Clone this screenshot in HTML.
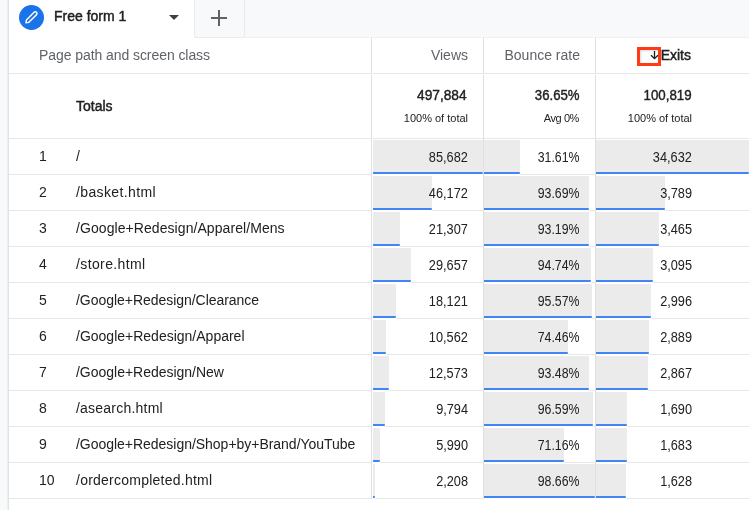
<!DOCTYPE html>
<html><head><meta charset="utf-8"><style>
*{margin:0;padding:0;box-sizing:border-box}
html,body{width:749px;height:510px;overflow:hidden;background:#fff}
body{position:relative;font-family:"Liberation Sans",sans-serif;color:#202124}
.a{position:absolute}
.t{position:absolute;white-space:nowrap;line-height:1}
.hl{position:absolute;left:9px;width:740px;height:1px;background:#e8e8e8}
.vl{position:absolute;width:1px;background:#e0e0e0}
.bar{position:absolute;background:#ebebeb}
.blu{position:absolute;left:0;right:0;bottom:0;height:2px;background:#4285f4;border-radius:0 1px 1px 0}
.wu{position:absolute;left:0;right:0;bottom:-1px;height:1px;background:#fff}
.num{position:absolute;white-space:nowrap;line-height:1;font-size:14px;text-align:right}
</style></head><body>

<div id="root" style="position:absolute;left:0;top:0;width:749px;height:510px;will-change:transform">
<div class="a" style="left:0;top:0;width:749px;height:38px;background:#f8f9fa"></div>
<div class="a" style="left:0;top:37px;width:749px;height:1px;background:#eef0f1"></div>
<div class="a" style="left:0;top:0;width:8px;height:510px;background:#f8f9fa"></div>
<div class="a" style="left:8px;top:0;width:1px;height:510px;background:#e2e3e4;box-shadow:-1px 0 1.5px #e9eaeb"></div>
<div class="a" style="left:9px;top:0;width:185px;height:38px;background:#fff"></div>
<div class="a" style="left:19px;top:5px;width:25px;height:25px;border-radius:50%;background:#1a73e8"></div>
<svg class="a" style="left:19px;top:5px" width="25" height="25" viewBox="0 0 25 25"><g transform="translate(12.3 12.5) rotate(-45)"><path d="M-7.4 0 L-5.2 -1.7 H5.6 A1.7 1.7 0 0 1 5.6 1.7 H-5.2 Z" fill="none" stroke="#fff" stroke-width="1.5" stroke-linejoin="miter"/></g></svg>
<div class="t" style="left:54px;top:9px;font-size:14px;-webkit-text-stroke:0.45px #202124;color:#202124">Free form 1</div>
<svg class="a" style="left:169px;top:15px" width="10" height="5" viewBox="0 0 10 5"><path d="M0 0 L10 0 L5 5 Z" fill="#3c4043"/></svg>
<div class="a" style="left:194px;top:-4px;width:51px;height:42px;background:#f8f9fa;border:1px solid #e9ebee;border-radius:3px"></div>
<div class="a" style="left:211px;top:17px;width:16px;height:2px;background:#5f6368"></div>
<div class="a" style="left:218px;top:10px;width:2px;height:16px;background:#5f6368"></div>
<div class="t" style="left:39px;top:48px;font-size:14px;letter-spacing:-0.07px;color:#5f6368">Page path and screen class</div>
<div class="num" style="right:281px;top:48px;color:#5f6368">Views</div>
<div class="num" style="right:169px;top:48px;color:#5f6368">Bounce rate</div>
<div class="num" style="right:58px;top:48px;-webkit-text-stroke:0.45px #202124;color:#202124">Exits</div>
<div class="a" style="left:637px;top:47px;width:24px;height:19px;border:3px solid #ff3a14;background:#fbfcfc;box-shadow:inset 1px 1px 2px #d3dfe2"></div>
<svg class="a" style="left:649px;top:49px" width="11" height="12" viewBox="0 0 11 12"><path d="M5.5 2 V9.5 M2 6.2 L5.5 9.7 L9 6.2" fill="none" stroke="#202124" stroke-width="1.3"/></svg>
<div class="hl" style="top:73px"></div>
<div class="hl" style="top:138px"></div>
<div class="hl" style="top:174px"></div>
<div class="hl" style="top:210px"></div>
<div class="hl" style="top:246px"></div>
<div class="hl" style="top:282px"></div>
<div class="hl" style="top:318px"></div>
<div class="hl" style="top:354px"></div>
<div class="hl" style="top:390px"></div>
<div class="hl" style="top:426px"></div>
<div class="hl" style="top:462px"></div>
<div class="hl" style="top:498px"></div>
<div class="a" style="left:372px;top:138px;width:1px;height:1px;background:#fff"></div>
<div class="a" style="left:372px;top:73px;width:1px;height:1px;background:#fff"></div>
<div class="vl" style="left:371px;top:38px;height:460px"></div>
<div class="vl" style="left:483px;top:38px;height:460px"></div>
<div class="vl" style="left:595px;top:38px;height:460px"></div>
<div class="t" style="left:76px;top:99px;font-size:14px;-webkit-text-stroke:0.45px #202124">Totals</div>
<div class="num" style="right:282px;top:88px;-webkit-text-stroke:0.4px #202124;transform:scaleX(0.98);transform-origin:100% 50%">497,884</div>
<div class="num" style="right:170px;top:88px;-webkit-text-stroke:0.4px #202124;transform:scaleX(0.94);transform-origin:100% 50%">36.65%</div>
<div class="num" style="right:57px;top:88px;-webkit-text-stroke:0.4px #202124;transform:scaleX(0.95);transform-origin:100% 50%">100,819</div>
<div class="num" style="right:281px;top:113px;font-size:11px">100% of total</div>
<div class="num" style="right:170px;top:113px;font-size:11px;letter-spacing:-0.4px">Avg 0%</div>
<div class="num" style="right:57px;top:113px;font-size:11px">100% of total</div>
<div class="bar" style="left:373px;top:140px;width:110px;height:34px"><div class="blu"></div><div class="wu" style="left:-1px"></div></div>
<div class="bar" style="left:484px;top:140px;width:36px;height:34px"><div class="blu"></div><div class="wu"></div></div>
<div class="bar" style="left:596px;top:140px;width:153px;height:34px"><div class="blu"></div><div class="wu"></div></div>
<div class="t" style="left:39px;top:149px;font-size:14px">1</div>
<div class="t" style="left:76px;top:149px;font-size:14px;letter-spacing:0.900px">/</div>
<div class="num" style="right:281px;top:150px;transform:scaleX(0.91);transform-origin:100% 50%">85,682</div>
<div class="num" style="right:170px;top:150px;transform:scaleX(0.88);transform-origin:100% 50%">31.61%</div>
<div class="num" style="right:57px;top:150px;transform:scaleX(0.91);transform-origin:100% 50%">34,632</div>
<div class="bar" style="left:373px;top:176px;width:59px;height:34px"><div class="blu"></div><div class="wu" style="left:-1px"></div></div>
<div class="bar" style="left:484px;top:176px;width:105px;height:34px"><div class="blu"></div><div class="wu"></div></div>
<div class="bar" style="left:596px;top:176px;width:69px;height:34px"><div class="blu"></div><div class="wu"></div></div>
<div class="t" style="left:39px;top:185px;font-size:14px">2</div>
<div class="t" style="left:76px;top:185px;font-size:14px;letter-spacing:0.373px">/basket.html</div>
<div class="num" style="right:281px;top:186px;transform:scaleX(0.91);transform-origin:100% 50%">46,172</div>
<div class="num" style="right:170px;top:186px;transform:scaleX(0.88);transform-origin:100% 50%">93.69%</div>
<div class="num" style="right:57px;top:186px;transform:scaleX(0.91);transform-origin:100% 50%">3,789</div>
<div class="bar" style="left:373px;top:212px;width:27px;height:34px"><div class="blu"></div><div class="wu" style="left:-1px"></div></div>
<div class="bar" style="left:484px;top:212px;width:105px;height:34px"><div class="blu"></div><div class="wu"></div></div>
<div class="bar" style="left:596px;top:212px;width:63px;height:34px"><div class="blu"></div><div class="wu"></div></div>
<div class="t" style="left:39px;top:221px;font-size:14px">3</div>
<div class="t" style="left:76px;top:221px;font-size:14px;letter-spacing:0.071px">/Google+Redesign/Apparel/Mens</div>
<div class="num" style="right:281px;top:222px;transform:scaleX(0.91);transform-origin:100% 50%">21,307</div>
<div class="num" style="right:170px;top:222px;transform:scaleX(0.88);transform-origin:100% 50%">93.19%</div>
<div class="num" style="right:57px;top:222px;transform:scaleX(0.91);transform-origin:100% 50%">3,465</div>
<div class="bar" style="left:373px;top:248px;width:38px;height:34px"><div class="blu"></div><div class="wu" style="left:-1px"></div></div>
<div class="bar" style="left:484px;top:248px;width:107px;height:34px"><div class="blu"></div><div class="wu"></div></div>
<div class="bar" style="left:596px;top:248px;width:57px;height:34px"><div class="blu"></div><div class="wu"></div></div>
<div class="t" style="left:39px;top:257px;font-size:14px">4</div>
<div class="t" style="left:76px;top:257px;font-size:14px;letter-spacing:0.380px">/store.html</div>
<div class="num" style="right:281px;top:258px;transform:scaleX(0.91);transform-origin:100% 50%">29,657</div>
<div class="num" style="right:170px;top:258px;transform:scaleX(0.88);transform-origin:100% 50%">94.74%</div>
<div class="num" style="right:57px;top:258px;transform:scaleX(0.91);transform-origin:100% 50%">3,095</div>
<div class="bar" style="left:373px;top:284px;width:23px;height:34px"><div class="blu"></div><div class="wu" style="left:-1px"></div></div>
<div class="bar" style="left:484px;top:284px;width:108px;height:34px"><div class="blu"></div><div class="wu"></div></div>
<div class="bar" style="left:596px;top:284px;width:55px;height:34px"><div class="blu"></div><div class="wu"></div></div>
<div class="t" style="left:39px;top:293px;font-size:14px">5</div>
<div class="t" style="left:76px;top:293px;font-size:14px;letter-spacing:-0.040px">/Google+Redesign/Clearance</div>
<div class="num" style="right:281px;top:294px;transform:scaleX(0.91);transform-origin:100% 50%">18,121</div>
<div class="num" style="right:170px;top:294px;transform:scaleX(0.88);transform-origin:100% 50%">95.57%</div>
<div class="num" style="right:57px;top:294px;transform:scaleX(0.91);transform-origin:100% 50%">2,996</div>
<div class="bar" style="left:373px;top:320px;width:13px;height:34px"><div class="blu"></div><div class="wu" style="left:-1px"></div></div>
<div class="bar" style="left:484px;top:320px;width:84px;height:34px"><div class="blu"></div><div class="wu"></div></div>
<div class="bar" style="left:596px;top:320px;width:53px;height:34px"><div class="blu"></div><div class="wu"></div></div>
<div class="t" style="left:39px;top:329px;font-size:14px">6</div>
<div class="t" style="left:76px;top:329px;font-size:14px;letter-spacing:0.000px">/Google+Redesign/Apparel</div>
<div class="num" style="right:281px;top:330px;transform:scaleX(0.91);transform-origin:100% 50%">10,562</div>
<div class="num" style="right:170px;top:330px;transform:scaleX(0.88);transform-origin:100% 50%">74.46%</div>
<div class="num" style="right:57px;top:330px;transform:scaleX(0.91);transform-origin:100% 50%">2,889</div>
<div class="bar" style="left:373px;top:356px;width:16px;height:34px"><div class="blu"></div><div class="wu" style="left:-1px"></div></div>
<div class="bar" style="left:484px;top:356px;width:105px;height:34px"><div class="blu"></div><div class="wu"></div></div>
<div class="bar" style="left:596px;top:356px;width:52px;height:34px"><div class="blu"></div><div class="wu"></div></div>
<div class="t" style="left:39px;top:365px;font-size:14px">7</div>
<div class="t" style="left:76px;top:365px;font-size:14px;letter-spacing:-0.016px">/Google+Redesign/New</div>
<div class="num" style="right:281px;top:366px;transform:scaleX(0.91);transform-origin:100% 50%">12,573</div>
<div class="num" style="right:170px;top:366px;transform:scaleX(0.88);transform-origin:100% 50%">93.48%</div>
<div class="num" style="right:57px;top:366px;transform:scaleX(0.91);transform-origin:100% 50%">2,867</div>
<div class="bar" style="left:373px;top:392px;width:12px;height:34px"><div class="blu"></div><div class="wu" style="left:-1px"></div></div>
<div class="bar" style="left:484px;top:392px;width:109px;height:34px"><div class="blu"></div><div class="wu"></div></div>
<div class="bar" style="left:596px;top:392px;width:31px;height:34px"><div class="blu"></div><div class="wu"></div></div>
<div class="t" style="left:39px;top:401px;font-size:14px">8</div>
<div class="t" style="left:76px;top:401px;font-size:14px;letter-spacing:0.217px">/asearch.html</div>
<div class="num" style="right:281px;top:402px;transform:scaleX(0.91);transform-origin:100% 50%">9,794</div>
<div class="num" style="right:170px;top:402px;transform:scaleX(0.88);transform-origin:100% 50%">96.59%</div>
<div class="num" style="right:57px;top:402px;transform:scaleX(0.91);transform-origin:100% 50%">1,690</div>
<div class="bar" style="left:373px;top:428px;width:7px;height:34px"><div class="blu"></div><div class="wu" style="left:-1px"></div></div>
<div class="bar" style="left:484px;top:428px;width:80px;height:34px"><div class="blu"></div><div class="wu"></div></div>
<div class="bar" style="left:596px;top:428px;width:31px;height:34px"><div class="blu"></div><div class="wu"></div></div>
<div class="t" style="left:39px;top:437px;font-size:14px">9</div>
<div class="t" style="left:76px;top:437px;font-size:14px;letter-spacing:-0.027px">/Google+Redesign/Shop+by+Brand/YouTube</div>
<div class="num" style="right:281px;top:438px;transform:scaleX(0.91);transform-origin:100% 50%">5,990</div>
<div class="num" style="right:170px;top:438px;transform:scaleX(0.88);transform-origin:100% 50%">71.16%</div>
<div class="num" style="right:57px;top:438px;transform:scaleX(0.91);transform-origin:100% 50%">1,683</div>
<div class="bar" style="left:373px;top:464px;width:2px;height:34px"><div class="blu"></div><div class="wu" style="left:-1px"></div></div>
<div class="bar" style="left:484px;top:464px;width:111px;height:34px"><div class="blu"></div><div class="wu"></div></div>
<div class="bar" style="left:596px;top:464px;width:30px;height:34px"><div class="blu"></div><div class="wu"></div></div>
<div class="t" style="left:39px;top:473px;font-size:14px">10</div>
<div class="t" style="left:76px;top:473px;font-size:14px;letter-spacing:0.242px">/ordercompleted.html</div>
<div class="num" style="right:281px;top:474px;transform:scaleX(0.91);transform-origin:100% 50%">2,208</div>
<div class="num" style="right:170px;top:474px;transform:scaleX(0.88);transform-origin:100% 50%">98.66%</div>
<div class="num" style="right:57px;top:474px;transform:scaleX(0.91);transform-origin:100% 50%">1,628</div>
<div class="a" style="left:371px;top:74px;width:1px;height:1px;background:#fff"></div>
<div class="a" style="left:483px;top:74px;width:1px;height:1px;background:#fff"></div>
<div class="a" style="left:595px;top:74px;width:1px;height:1px;background:#fff"></div>
</div></body></html>
